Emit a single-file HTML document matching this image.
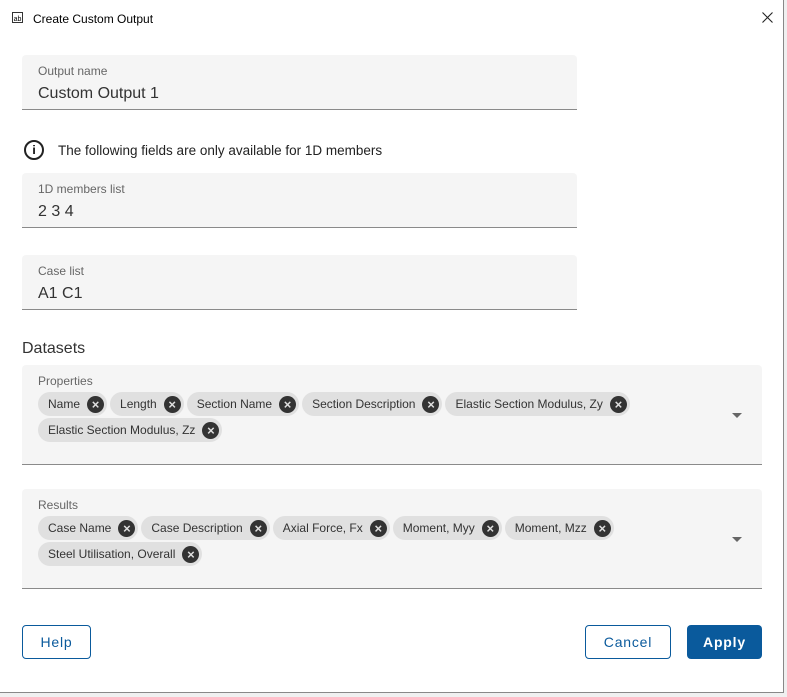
<!DOCTYPE html><html><head><style>
body{margin:0;width:787px;height:697px;background:#f0f0f0;font-family:"Liberation Sans",sans-serif;position:relative;overflow:hidden}
.win{position:absolute;left:0;top:0;width:784px;height:693px;background:#fff;border-right:1px solid #888;border-bottom:1px solid #888;box-sizing:border-box}
.t{position:absolute;left:33px;top:12px;font-size:12px;color:#000}
.f{position:absolute;left:22px;width:555px;background:#f5f5f5;border-bottom:1px solid #8a8a8a;border-radius:4px 4px 0 0}
.l{position:absolute;left:16px;font-size:12px;color:#666}
.v{position:absolute;left:16px;font-size:16px;color:#333}
.chips{position:absolute;left:16px;top:27px;width:640px}
.c{display:inline-flex;align-items:center;height:24px;background:#e0e0e0;border-radius:12px;padding:0 3px 0 10px;margin:0 3px 2px 0;font-size:12px;color:#333;vertical-align:top}
.x{width:17px;height:17px;border-radius:50%;background:#333;color:#e0e0e0;font-size:13px;line-height:17px;text-align:center;margin-left:7px;font-weight:bold}
.b{position:absolute;top:625px;height:34px;border-radius:4px;font-size:14px;letter-spacing:0.8px;display:flex;align-items:center;justify-content:center;box-sizing:border-box}
.arr{position:absolute;right:20px;width:0;height:0;border-left:5px solid transparent;border-right:5px solid transparent;border-top:5px solid #666}
</style></head><body><div class="win">
<div style="position:absolute;left:12px;top:12px;width:11px;height:11px;border:1px solid #333;font-size:7px;line-height:13px;text-align:center;box-sizing:border-box">ab</div>
<div class="t">Create Custom Output</div>
<svg style="position:absolute;left:762px;top:12px" width="11" height="11"><path d="M0.5 0.5L10.5 10.5M10.5 0.5L0.5 10.5" stroke="#222" stroke-width="1.1"/></svg>
<div class="f" style="top:55px;height:54px"><div class="l" style="top:9px">Output name</div><div class="v" style="top:30px">Custom Output 1</div></div>
<div style="position:absolute;left:24px;top:140px;width:20px;height:20px;border:2px solid #222;border-radius:50%;box-sizing:border-box;font-size:12px;font-weight:bold;text-align:center;line-height:16px">i</div>
<div style="position:absolute;left:58px;top:143px;font-size:13.5px;color:#222">The following fields are only available for 1D members</div>
<div class="f" style="top:173px;height:54px"><div class="l" style="top:9px">1D members list</div><div class="v" style="top:30px">2 3 4</div></div>
<div class="f" style="top:255px;height:54px"><div class="l" style="top:9px">Case list</div><div class="v" style="top:30px">A1 C1</div></div>
<div style="position:absolute;left:22px;top:340px;font-size:16px;color:#333">Datasets</div>
<div class="f" style="top:365px;height:99px;width:740px"><div class="l" style="top:9px">Properties</div><div class="chips"><span class="c">Name<span class="x">×</span></span><span class="c">Length<span class="x">×</span></span><span class="c">Section Name<span class="x">×</span></span><span class="c">Section Description<span class="x">×</span></span><span class="c">Elastic Section Modulus, Zy<span class="x">×</span></span><span class="c">Elastic Section Modulus, Zz<span class="x">×</span></span></div><div class="arr" style="top:48px"></div></div>
<div class="f" style="top:489px;height:99px;width:740px"><div class="l" style="top:9px">Results</div><div class="chips"><span class="c">Case Name<span class="x">×</span></span><span class="c">Case Description<span class="x">×</span></span><span class="c">Axial Force, Fx<span class="x">×</span></span><span class="c">Moment, Myy<span class="x">×</span></span><span class="c">Moment, Mzz<span class="x">×</span></span><span class="c">Steel Utilisation, Overall<span class="x">×</span></span></div><div class="arr" style="top:48px"></div></div>
<div class="b" style="left:22px;width:69px;border:1px solid #0a5a9c;color:#0a5a9c">Help</div>
<div class="b" style="left:585px;width:86px;border:1px solid #0a5a9c;color:#0a5a9c">Cancel</div>
<div class="b" style="left:687px;width:75px;background:#0a5a9c;color:#fff;font-weight:bold">Apply</div>
</div></body></html>
